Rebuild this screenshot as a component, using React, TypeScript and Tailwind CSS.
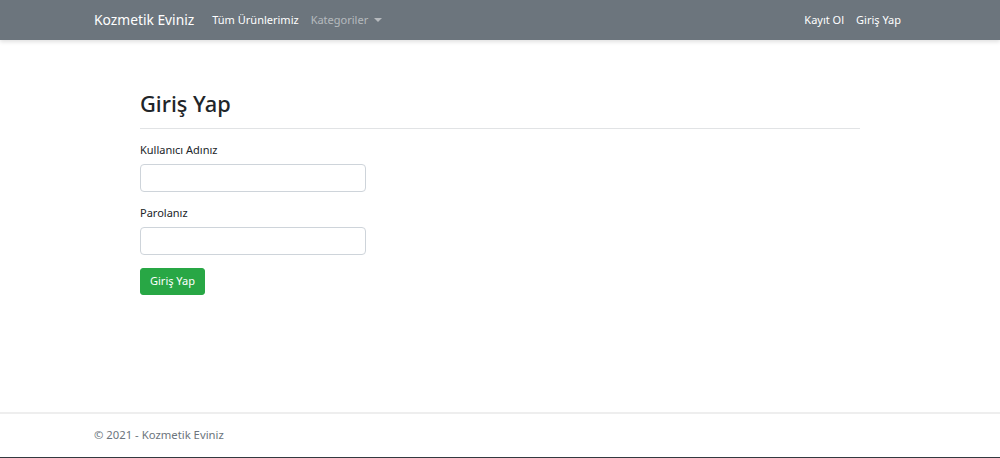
import React from "react";

const font = { fontFamily: '"Noto Sans", "Open Sans", sans-serif' };

const Navbar = () => (
  <nav className="h-[40px] bg-[#6c757d] shadow-[0_2px_4px_rgba(0,0,0,0.12)] relative z-10">
    <div className="h-full flex items-center pl-[94px] pr-[99px]">
      <span className="text-[13.8px] text-white mr-[18px]">Kozmetik Eviniz</span>
      <a className="text-[11px] text-white mr-[12px]">Tüm Ürünlerimiz</a>
      <a className="text-[11px] text-white/50 flex items-center">
        Kategoriler
        <span className="ml-[6px] inline-block w-0 h-0 border-l-[4px] border-r-[4px] border-t-[4px] border-l-transparent border-r-transparent border-t-white/50" />
      </a>
      <div className="ml-auto flex items-center gap-[12px] text-[11px] text-white">
        <a>Kayıt Ol</a>
        <a>Giriş Yap</a>
      </div>
    </div>
  </nav>
);

const Field = ({ label, type }: { label: string; type: string }) => (
  <div className="mb-[13px]">
    <label className="block text-[11px] text-[#212529] mb-[6px] leading-[16px]">{label}</label>
    <input
      type={type}
      className="block w-[226px] h-[28px] border border-[#ced4da] rounded-[4px] bg-white"
    />
  </div>
);

export default function App() {
  return (
    <div className="min-h-screen flex flex-col bg-white" style={font}>
      <Navbar />
      <main className="flex-1 px-[140px] pt-[50px]">
        <h1 className="text-[21.8px] font-medium text-[#212529] leading-[28px]">Giriş Yap</h1>
        <hr className="mt-[10px] mb-[13px] border-t border-[#e1e3e5]" />
        <Field label="Kullanıcı Adınız" type="text" />
        <Field label="Parolanız" type="password" />
        <button className="block h-[27px] px-[9px] bg-[#28a745] text-white text-[11px] rounded-[3px] border border-[#28a745]">
          Giriş Yap
        </button>
      </main>
      <footer className="h-[46px] border-t-2 border-t-[#eeeeee] border-b border-b-[#343a40] flex items-center pl-[94px]">
        <span className="text-[11.3px] text-[#6c757d]">© 2021 - Kozmetik Eviniz</span>
      </footer>
    </div>
  );
}
